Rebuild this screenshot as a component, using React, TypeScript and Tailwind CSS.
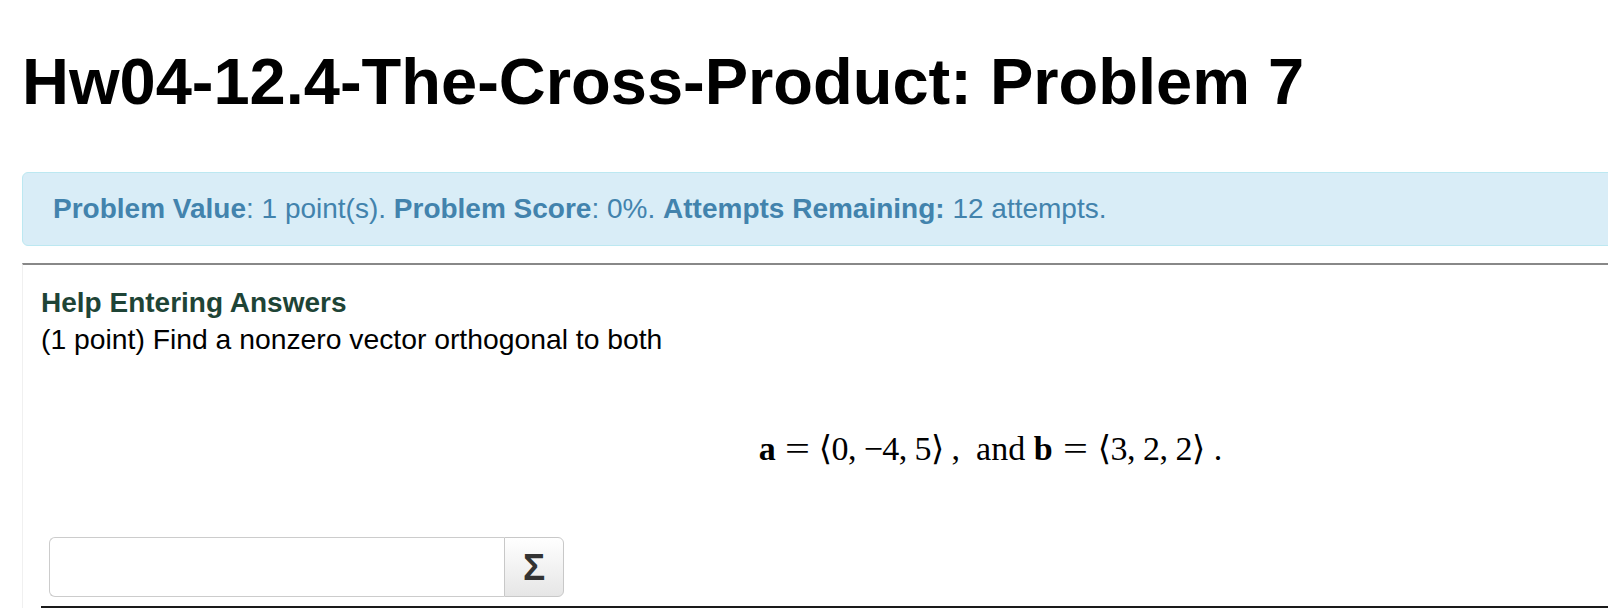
import React from "react";

export default function App() {
  return (
    <div className="w-[1608px] h-[616px] overflow-hidden bg-white font-['Liberation_Sans',Arial,sans-serif]">
      <div className="w-[1936px] pl-[22px]">
        <h1 className="mt-[50px] text-[65px] leading-[64px] font-bold text-black">
          Hw04-12.4-The-Cross-Product: Problem 7
        </h1>
        <div className="mt-[58px] rounded-[6px] border border-[#bce8f1] bg-[#d9edf7] py-[18px] pl-[30px] text-[28px] leading-[36px] text-[#4283ad]">
          <b>Problem Value</b>: 1 point(s). <b>Problem Score</b>: 0%. <b>Attempts Remaining:</b> 12 attempts.
        </div>
        <div className="mt-[17px] border-t-2 border-l border-t-[#888888] border-l-[#f0f0f0] pl-[18px] pt-[20px] text-[28px] leading-[36px] text-black">
          <div className="font-bold text-[#1e4436]">Help Entering Answers</div>
          <div className="text-[28.3px]">(1 point) Find a nonzero vector orthogonal to both</div>
          <div className="mt-[71px] flex justify-center pl-[4px] font-['Liberation_Serif','DejaVu_Serif',serif] text-[34px] leading-[42px] whitespace-pre">
            <span className="font-bold">a</span>
            <span className="mx-[12px] inline-block scale-x-[1.3]">=</span>
            <span className="tracking-[-0.6px]">⟨0, −4, 5⟩</span>
            <span className="ml-[8px]">,</span>
            <span className="ml-[16px]">and </span>
            <span className="font-bold">b</span>
            <span className="mx-[13px] inline-block scale-x-[1.3]">=</span>
            <span className="tracking-[-0.5px]">⟨3, 2, 2⟩</span>
            <span className="ml-[9px]">.</span>
          </div>
          <div className="mt-[67px] ml-[8px] flex h-[60px] w-[515px]">
            <div className="h-full w-[455px] rounded-l-[6px] border border-r-0 border-[#cccccc] bg-white" />
            <div className="flex h-full w-[60px] items-center justify-center rounded-r-[6px] border border-[#c8c8c8] bg-gradient-to-b from-white to-[#e6e6e6] text-[37px] font-bold leading-none text-[#333333]">
              Σ
            </div>
          </div>
          <div className="mt-[9px] h-[2px] bg-[#1a1a1a]" />
        </div>
      </div>
    </div>
  );
}
